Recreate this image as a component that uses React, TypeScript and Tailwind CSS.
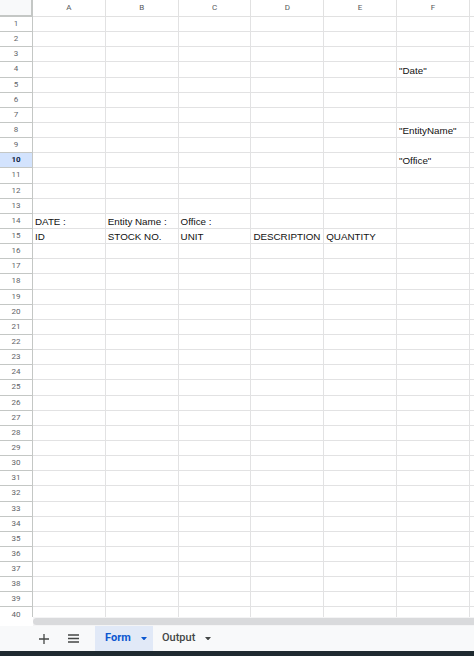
import React from "react";

const COLS = ["A", "B", "C", "D", "E", "F"];

const cellText: Record<number, Record<number, string>> = {
  4: { 5: '"Date"' },
  8: { 5: '"EntityName"' },
  10: { 5: '"Office"' },
  14: { 0: "DATE :", 1: "Entity Name :", 2: "Office :" },
  15: { 0: "ID", 1: "STOCK NO.", 2: "UNIT", 3: "DESCRIPTION", 4: "QUANTITY" },
};

function Caret({ color }: { color: string }) {
  return (
    <svg width="6" height="3.5" viewBox="0 0 6 3.5" className="ml-[10px]">
      <path d="M0 0 L6 0 L3 3.5 Z" fill={color} />
    </svg>
  );
}

export default function App() {
  const rows = Array.from({ length: 40 }, (_, i) => i + 1);
  return (
    <div className="w-[474px] h-[656px] flex flex-col bg-white overflow-hidden font-['Liberation_Sans',Arial,sans-serif]">
      {/* column header */}
      <div className="flex h-[17px] shrink-0">
        <div className="w-[33px] shrink-0 bg-[#f8f9fa] border-r-[2px] border-b-[2px] border-[#c4c7c5]" />
        {COLS.map((c) => (
          <div
            key={c}
            className="w-[72.8px] shrink-0 flex items-center justify-center border-r border-b border-[#e1e1e1] text-[8px] text-[#575a5c] font-['Roboto',sans-serif]"
          >
            {c}
          </div>
        ))}
        <div className="flex-1 border-b border-[#e1e1e1] bg-white" />
      </div>
      {/* rows */}
      <div className="h-[600px] shrink-0 overflow-hidden flex flex-col">
        {rows.map((r) => {
          const sel = r === 10;
          return (
            <div key={r} className="flex h-[15.15px] shrink-0">
              <div
                className={
                  sel
                    ? "w-[33px] shrink-0 flex items-center justify-center border-r border-b border-[#c4c7c5] bg-[#d3e3fd] text-[8px] font-bold text-[#0b1d3f] font-['Roboto',sans-serif]"
                    : "w-[33px] shrink-0 flex items-center justify-center border-r border-b border-[#c4c7c5] bg-white text-[8px] text-[#5f6368] font-['Roboto',sans-serif]"
                }
              >
                {r}
              </div>
              {COLS.map((c, ci) => (
                <div
                  key={c}
                  className="w-[72.8px] shrink-0 flex items-end px-[2px] border-r border-b border-[#e2e2e3] text-[9.8px] leading-[12px] text-[#111] whitespace-nowrap overflow-visible"
                >
                  {cellText[r]?.[ci] ?? ""}
                </div>
              ))}
              <div className="flex-1 border-b border-[#e2e2e3] bg-white" />
            </div>
          );
        })}
      </div>
      {/* horizontal scrollbar */}
      <div className="h-[9px] shrink-0 flex items-center bg-[#f4f4f5]">
        <div className="w-[33px] h-full bg-white" />
        <div className="flex-1 h-[7px] rounded-l-full bg-[#d9dadc]" />
      </div>
      {/* sheet tabs */}
      <div className="h-[25px] shrink-0 flex items-stretch bg-[#f8f9fa] font-['Roboto',sans-serif]">
        <div className="w-[95px] flex items-center">
          <div className="w-[58px] flex justify-center pl-[30px]">
            <svg width="10" height="10" viewBox="0 0 10 10">
              <path d="M5 0 V10 M0 5 H10" stroke="#444746" strokeWidth="1.3" />
            </svg>
          </div>
          <div className="flex-1 flex justify-center pr-[6px]">
            <svg width="11" height="9" viewBox="0 0 11 9">
              <path d="M0 1 H11 M0 4.5 H11 M0 8 H11" stroke="#444746" strokeWidth="1.3" />
            </svg>
          </div>
        </div>
        <div className="w-[58px] flex items-center pl-[10px] bg-[#e1e9f7] text-[11px] font-bold text-[#0b57d0]">
          Form
          <Caret color="#0b57d0" />
        </div>
        <div className="flex items-center pl-[9px] text-[11px] font-medium text-[#444746]">
          Output
          <Caret color="#444746" />
        </div>
      </div>
      <div className="h-[5px] shrink-0 bg-[#1f2a30]" />
    </div>
  );
}
